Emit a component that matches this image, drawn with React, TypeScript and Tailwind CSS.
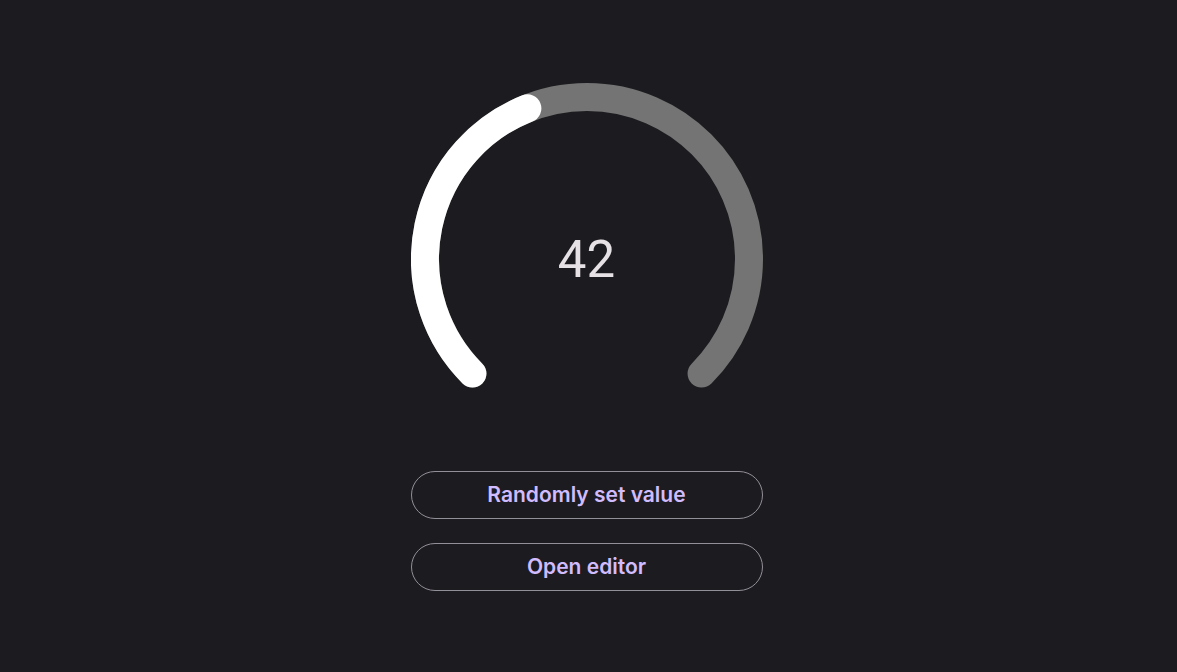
const R = 162
const C = 176

function point(deg: number) {
  const rad = (deg * Math.PI) / 180
  return { x: C + R * Math.sin(rad), y: C - R * Math.cos(rad) }
}

function arc(from: number, to: number) {
  const a = point(from)
  const b = point(to)
  const large = to - from > 180 ? 1 : 0
  return `M ${a.x} ${a.y} A ${R} ${R} 0 ${large} 1 ${b.x} ${b.y}`
}

function Gauge({ value }: { value: number }) {
  const end = -135 + (value / 100) * 270
  return (
    <div className="relative w-[352px] h-[352px]">
      <svg width="352" height="352" viewBox="0 0 352 352">
        <path d={arc(-135, 135)} fill="none" stroke="#747474" strokeWidth="28" strokeLinecap="round" />
        <path d={arc(-135, end)} fill="none" stroke="#ffffff" strokeWidth="28" strokeLinecap="round" />
      </svg>
      <div className="absolute inset-0 flex items-center justify-center">
        <span className="text-[51px] leading-none text-[#e6e1e5] font-['Roboto',sans-serif]">{value}</span>
      </div>
    </div>
  )
}

export default function App() {
  return (
    <div className="min-h-screen bg-[#1c1b1f] flex flex-col items-center justify-center pt-[2px] pr-[4px] font-['Inter',sans-serif]">
      <Gauge value={42} />
      <div className="mt-9 flex flex-col gap-6 w-[352px]">
        <button className="h-12 rounded-full border border-[#938f99] text-[#d0bcff] text-[21px] font-semibold">
          Randomly set value
        </button>
        <button className="h-12 rounded-full border border-[#938f99] text-[#d0bcff] text-[21px] font-semibold">
          Open editor
        </button>
      </div>
    </div>
  )
}
